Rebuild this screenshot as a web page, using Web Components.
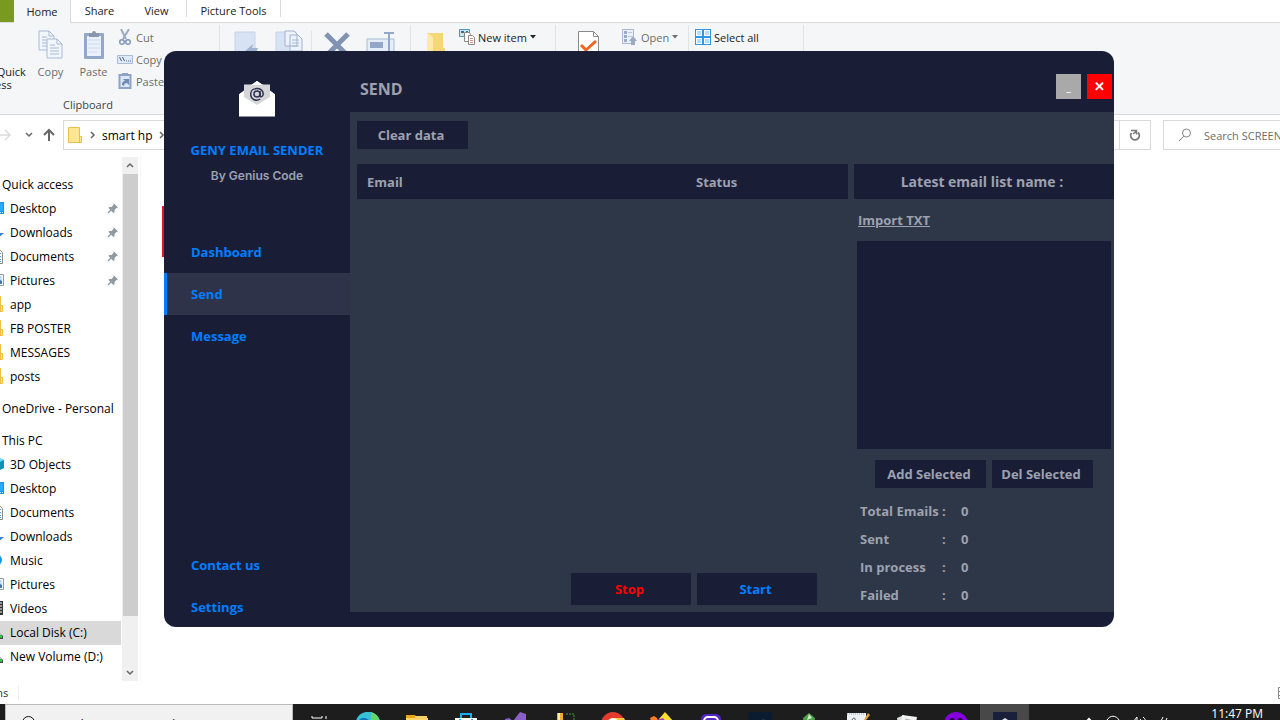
<!DOCTYPE html>
<html lang="en">
<head>
<meta charset="utf-8">
<meta name="viewport" content="width=device-width, initial-scale=1">
<title>Geny Email Sender</title>
<style>
    html, body {
        margin: 0;
        height: 100%;
        overflow: hidden;
    }
    body {
        font-family: "Open Sans", "Noto Sans", sans-serif;
        font-size: 12px;
        color: #000;
        background: #fff;
    }
</style>
</head>
<body>
<desktop-screen></desktop-screen>

<script>
const doc = (x, y) => `<path d="M${x} ${y}h10l5 5v14h-15z" fill="#f1f5fc" stroke="#a9b9d3"/><path d="M${x + 10} ${y}v5h5M${x + 3} ${y + 6}h5M${x + 3} ${y + 9}h9M${x + 3} ${y + 12}h9M${x + 3} ${y + 15}h9" fill="none" stroke="#a9b9d3"/>`;

// name: [width, height, svg content]
const ICONS = {
    pin: [20, 30, '<path d="M6 9l7 7-7 7z" fill="#98a3ad"/><path d="M0 14h7v4H0z" fill="#98a3ad"/>'],
    copy: [26, 30, doc(1, 1) + doc(9, 9)],
    paste: [22, 30, '<rect x="1" y="3" width="20" height="26" rx="1" fill="#93a7c8"/><path d="M4 6h14v20H4z" fill="#eaf1fb"/><path d="M5 10h12M5 14h12M5 18h12M5 22h9" stroke="#c9daf0"/><path d="M6 3h3a2 2 0 0 1 4 0h3v4H6z" fill="#8a96ac"/>'],
    cut: [16, 16, '<path d="M4 0l5 10M12 0L6 10" stroke="#9aabc4" stroke-width="2"/><circle cx="5" cy="13" r="2.3" fill="none" stroke="#8296b8" stroke-width="1.5"/><circle cx="11" cy="13" r="2.3" fill="none" stroke="#8296b8" stroke-width="1.5"/>'],
    path: [16, 16, '<path d="M.5 4.500h15v8H.5z" fill="#dfe9f7" stroke="#a9bdd8"/><path d="M2.500 6l2 4M5.500 6l2 4" stroke="#47638f"/><path d="M9 10h1M11 10h1M13 10h1" stroke="#47638f"/>'],
    shortcut: [16, 16, '<path d="M2.500 2h11v13h-11z" fill="#dce7f6" stroke="#8da2c4" stroke-width="2"/><path d="M5 0h6v3H5z" fill="#8da2c4"/><path d="M5 12c0-3 1-4 3-4L6 6h6v6l-2-2c-2 0-3 1-3 3z" fill="#6f8ab5"/>'],
    moveTo: [28, 30, '<path d="M3 2h20v28H3z" fill="#d7e3f4" stroke="#c5d4ea"/><path d="M26 18h-6l1-4-9 8 9 8z" fill="#9fb2d0"/>'],
    copyTo: [28, 30, '<path d="M1 2h20v28H1z" fill="#d7e3f4" stroke="#c5d4ea"/><path d="M10 1h9l3 3v12H10zM15 5h8l4 4v12H15z" fill="#eef3fb" stroke="#9fb2d0"/><path d="M17 10h7M17 13h7M17 16h7" stroke="#a9b9d3"/>'],
    remove: [28, 30, '<path d="M3 4l22 22M25 4L3 26" stroke="#8193b3" stroke-width="5"/>'],
    rename: [30, 30, '<path d="M2 9h27v14H2z" fill="#e4edf9" stroke="#a9bbd6"/><path d="M5 12h13v6H5z" fill="#93a7c8"/><path d="M19 3h10M24 3v26" stroke="#93a7c8" stroke-width="2"/>'],
    folder: [20, 30, '<path d="M2 3h16v15h2v12H2z" fill="#f6d777"/><path d="M2 3l6 4v23H2z" fill="#fdeaa8"/>'],
    newItem: [16, 16, '<path d="M.5.500h10v7H.5z" fill="#c9e6f7" stroke="#4d94bd"/><path d="M2 3h3M7 3h2" stroke="#3a6f94" stroke-width="2"/><path d="M5.500 3.500h5l1 2v7h-6z" fill="#fff" stroke="#888"/><path d="M9.500 6.500h4l2 2v7h-6z" fill="#fff" stroke="#888"/><path d="M11 9.500h3M11 11.500h3M11 13.500h3" stroke="#e08a8a"/>'],
    properties: [24, 30, '<path d="M2.500 1.500h15l5 5V30h-20z" fill="#fff" stroke="#8b8b8b"/><path d="M17.500 1.500v5h5" fill="none" stroke="#8b8b8b"/><path d="M5 15l5 5 10-9" fill="none" stroke="#ee6622" stroke-width="3"/>'],
    open: [16, 16, '<path d="M.5.500h11v14H.5z" fill="#eaf0fa" stroke="#a9b9d3"/><path d="M2 2h3v3H2zM2 6h3v3H2zM2 10h3v3H2z" fill="#9aabc8"/><path d="M6 3.500h4M6 7.500h4" stroke="#b9c7de"/><path d="M11 7l4 5h-2v4H9v-4H7z" fill="#9aa9c6"/>'],
    selectAll: [16, 16, '<path d="M0 0h16v16H0z" fill="#3394e0"/><path d="M1 1h6v6H1zM9 1h6v6H9zM1 9h6v6H1zM9 9h6v6H9z" fill="#fff"/><path d="M2 2h4v4H2zM10 2h4v4h-4zM2 10h4v4H2zM10 10h4v4h-4z" fill="#b5dcfa"/>'],
    caret: [6, 4, '<path d="M0 0h6L3 3.500z" fill="currentColor"/>'],
    forward: [16, 16, '<path d="M1 8h12M8 3l5 5-5 5" fill="none" stroke="#dcdcdc" stroke-width="1.500"/>'],
    chevronDown: [8, 8, '<path d="M1 2l3 3 3-3" fill="none" stroke="#666" stroke-width="1.500"/>'],
    chevronRight: [8, 8, '<path d="M2 1l3 3-3 3" fill="none" stroke="#666" stroke-width="1.500"/>'],
    up: [16, 16, '<path d="M8 14V3M3 8l5-5 5 5" fill="none" stroke="#666" stroke-width="2"/>'],
    folderSmall: [16, 16, '<path d="M.5.500h11v9h2v6H.5z" fill="#ffe694" stroke="#e9bf45"/><path d="M11.500 9v6" stroke="#e9bf45"/>'],
    refresh: [14, 14, '<path d="M3.500 5a4.300 4.300 0 1 0 6.500-.5" fill="none" stroke="#777" stroke-width="1.800"/><path d="M3 2.500h5.500v4M8.500 3L5 6" fill="none" stroke="#777" stroke-width="1.500"/>'],
    search: [14, 14, '<circle cx="8.500" cy="5" r="4" fill="none" stroke="#8a8088"/><path d="M6 8l-5 5" stroke="#8a8088"/>'],
    pushpin: [12, 12, '<path d="M6.500 1l4.500 4.500-1.500.5-2 2 0 2.500-1 .5L1.500 6l.5-1h2.500l2-2z" fill="#8d99a3"/><path d="M4 8l-3 3" stroke="#8d99a3" stroke-width="1.500"/>'],
    navDesktop: [16, 16, '<path d="M0 2h15v12H0z" fill="#1593e8"/><path d="M0 3h14v8H0z" fill="#29a9ff"/><path d="M1 12.500h13" stroke="#c9ecff" stroke-dasharray="1 1"/>'],
    navDownloads: [16, 16, '<path d="M5 9h10l-7 6-7-6h4V1h5v8" fill="#3485d1"/>'],
    navDocuments: [16, 16, '<path d="M1.500.500h8l4 4v11h-12z" fill="#fff" stroke="#888"/><path d="M6 5.500h6M6 8.500h6M6 11.500h6M6 13.500h6" stroke="#4d9bd8"/>'],
    navPictures: [16, 16, '<path d="M.5 2.500h14v11H.5z" fill="#fff" stroke="#8c9aa6"/><path d="M2 4h11v8H2z" fill="#bfe0f8"/><path d="M5 12c2-5 5-5 8-3v3z" fill="#4377ad"/>'],
    navObjects: [16, 16, '<path d="M8 1l7 3v8l-7 3-7-3V4z" fill="#1ab3d6"/><path d="M8 7l7-3v8l-7 3z" fill="#0793b8"/><path d="M1 4l7-3 7 3-7 3z" fill="#6bdcf0"/>'],
    navMusic: [16, 16, '<circle cx="7" cy="8" r="6" fill="#1696ec"/><path d="M6 4v7" stroke="#fff"/>'],
    navVideos: [16, 16, '<path d="M0 1h14v14H0z" fill="#333"/><path d="M0 2h10v6H0z" fill="#568ec7"/><path d="M0 8h10v6H0z" fill="#56a04f"/><path d="M12 2v12" stroke="#fff" stroke-dasharray="2 1"/>'],
    navDisk: [16, 16, '<path d="M1 9h10l3 3v3H0v-4z" fill="#4b4f52"/><path d="M1 9l2-2h7l3 4H0z" fill="#c7cbce"/><path d="M10 12.500h3" stroke="#36e04a" stroke-width="2"/>'],
    envelope: [38, 38, '<path d="M1 14L19 1l18 13v22.500H1z" fill="#fff"/><path d="M6 4.500h26V17l-13 8L6 17z" fill="#d5d6d8"/><path d="M13 5L19 1l6 4z" fill="#fff"/><path d="M6 4v6L1 14V4zM32 4v6l5 4V4z" fill="#191e36"/><circle cx="19" cy="14" r="3" fill="none" stroke="#2c3150" stroke-width="1.500"/><path d="M22 11v4.500c0 2 3.200 1.500 3.200-1.700 0-7-12.500-7-12.500.2 0 6 6 7.500 9.500 5" fill="none" stroke="#2c3150" stroke-width="1.500"/>'],
    taskView: [24, 24, '<path d="M5 4v2h10V4M5 11h10v7H5zM19 4v3M19 10v8" fill="none" stroke="#fff"/>'],
    edge: [24, 24, '<circle cx="12" cy="12" r="12" fill="#1583d0"/><path d="M0 9C3-3 21-3 24 9v4H12z" fill="#35c2d4"/><path d="M15 0c6 2 9 6 9 13h-9z" fill="#63d66a"/><path d="M2 10c2-5 8-5 12-1v5H2z" fill="#1473b8"/>'],
    explorer: [24, 24, '<path d="M1 3h9l2 3H1z" fill="#e8a317"/><path d="M1 6h22v15H1z" fill="#ffd766"/><path d="M10 4h12v3H10z" fill="#f7cf68"/>'],
    store: [24, 24, '<path d="M7 6V2h10v4" fill="none" stroke="#1badf4" stroke-width="2"/><path d="M1 6h22v16H1z" fill="#fff"/><path d="M5 7h2v2H5zM17 7h2v2h-2z" fill="#1badf4"/>'],
    studio: [24, 24, '<path d="M17 0l6 2v20l-6 2L6 13l-4 3V7l4-1 4 3z" fill="#8a5fc8"/>'],
    tools: [24, 24, '<path d="M5 1h6v21H5z" fill="#e9b12f"/><path d="M6 1h2v21H6z" fill="#fff0a2"/><path d="M14 2h8v19" fill="none" stroke="#3f9b3b" stroke-dasharray="2 1"/>'],
    chrome: [24, 24, '<circle cx="12" cy="12" r="12" fill="#e33b2e"/><path d="M2 8l10 4-1 12A12 12 0 0 1 2 8z" fill="#2ba24c"/><path d="M12 6h11a12 12 0 0 1-10 18z" fill="#fcc934"/><circle cx="12" cy="12" r="6" fill="#fff"/><circle cx="12" cy="12" r="4" fill="#3f7de8"/>'],
    flame: [24, 24, '<path d="M0 6l4-2 3 2 2 5-4 10z" fill="#ff7d1e"/><path d="M9 7l6-7 9 10-4 12H8z" fill="#ffdf32"/><path d="M7 8l6-2 4 5-4 10H6z" fill="#a03ccb"/>'],
    camera: [24, 24, '<rect x="2" y="2" width="20" height="20" rx="5" fill="#5424c4"/><rect x="5" y="5" width="14" height="14" rx="4" fill="none" stroke="#fff" stroke-width="2"/><circle cx="12" cy="12" r="3" fill="none" stroke="#fff" stroke-width="2"/>'],
    navy: [24, 24, '<path d="M0 0h24v24H0z" fill="#0b1b30"/><path d="M9 9h2M14 8h3" stroke="#24466b"/>'],
    gem: [24, 24, '<path d="M12 1l6 5-1 8-5 8-5-8-1-8z" fill="#4e9e4b"/><path d="M12 2l3 4-5 2z" fill="#cdecc6"/>'],
    notepad: [24, 24, '<path d="M1 1h19v22H1z" fill="#eef1f4"/><path d="M1 2h18" stroke="#9da2a7" stroke-dasharray="1 1"/><path d="M6 8c1-3 4-2 3 0" fill="none" stroke="#4d5661"/><path d="M22 1l2 2-7 9-2 1z" fill="#e0a03c"/>'],
    papers: [24, 24, '<path d="M2 6l7-3 3 12-8 3z" fill="#d9dcdc"/><path d="M7 3l15 2-3 17-14-3z" fill="#f2f3f3"/><path d="M10 7l9 2" stroke="#aaa"/>'],
    mask: [24, 24, '<circle cx="12" cy="12" r="12" fill="#8400dd"/><path d="M6 9a2 2 0 0 1 4 0M14 9a2 2 0 0 1 4 0" fill="none" stroke="#280149" stroke-width="2"/>'],
    sender: [24, 24, '<path d="M0 0h24v24H0z" fill="#1a1f3b"/><path d="M6 10l6-4 6 4v8H6z" fill="#e5e5ea"/>'],
    trayUp: [16, 16, '<path d="M3 9l5-5 5 5" fill="none" stroke="#fff" stroke-width="2"/>'],
    wifi: [16, 16, '<path d="M2 5c3-5 9-5 12 0M4 9c2-3 6-3 8 0" fill="none" stroke="#fff"/>'],
    volume: [20, 16, '<path d="M1 7h3l4-5v13l-4-4H1zM11 4c3 2 3 6 0 8M14 2c4 3 4 9 0 12" fill="none" stroke="#fff"/>'],
    ink: [12, 16, '<path d="M2 10l4-8M6 12l4-9" stroke="#fff"/>'],
    battery: [26, 16, '<path d="M1 6.500h22v8H1z" fill="none" stroke="#fff"/>'],
    details: [12, 12, '<path d="M.5.500h11v11H.5zM0 4.500h12M0 8.500h12" fill="none" stroke="#888"/>'],
};

// Every element below only has to supply its template.
class BaseElement extends HTMLElement {
    constructor() {
        super();
        this.attachShadow({mode: 'open'});
    }

    connectedCallback() {
        const template = document.createElement('template');
        template.innerHTML = this.getTemplate();
        this.shadowRoot.replaceChildren(template.content.cloneNode(true));
    }
}

class UiIcon extends BaseElement {
    getTemplate() {
        const [w, h, body] = ICONS[this.getAttribute('name')];
        return `
            <style>
                :host { display: block; flex: none; }
                svg { display: block; }
            </style>
            <svg width="${w}" height="${h}" viewBox="0 0 ${w} ${h}" aria-hidden="true">${body}</svg>
        `;
    }
}

/* ---------- file explorer ---------- */

class RibbonTabs extends BaseElement {
    getTemplate() {
        return `
            <style>
                :host {
                    display: flex;
                    height: 22px;
                    border-bottom: 1px solid #dadbdc;
                    font-size: 11px;
                    line-height: 22px;
                }
                button {
                    box-sizing: border-box;
                    width: 57px;
                    padding: 0;
                    border: 0;
                    background: none;
                    font: inherit;
                    color: #222;
                }
                .file { width: 14px; background: #7a9a1f; }
                .home {
                    height: 23px;
                    background: #f4f6f8;
                    border-right: 1px solid #dadbdc;
                }
                .tools {
                    width: 95px;
                    height: 17px;
                    margin-left: 1px;
                    line-height: 22px;
                    border: solid #dadbdc;
                    border-width: 0 1px;
                }
            </style>
            <button class="file" aria-label="File"></button>
            <button class="home">Home</button>
            <button>Share</button>
            <button>View</button>
            <button class="tools">Picture Tools</button>
        `;
    }
}

class RibbonButton extends BaseElement {
    getTemplate() {
        const caret = this.hasAttribute('menu') ? '<ui-icon name="caret"></ui-icon>' : '';
        return `
            <style>
                :host { display: block; flex: none; width: 43px; padding-top: 4px; color: #222; }
                :host([small]) { width: auto; padding-top: 0; }
                :host([wide]) { width: 68px; }
                :host([off]) { color: #6d6d6d; }
                button {
                    display: flex;
                    flex-direction: column;
                    align-items: center;
                    gap: 5px;
                    width: 100%;
                    padding: 0;
                    border: 0;
                    background: none;
                    font: inherit;
                    font-size: 11px;
                    line-height: 13px;
                    color: inherit;
                }
                :host([small]) button { flex-direction: row; gap: 3px; height: 22px; white-space: nowrap; }
            </style>
            <button>
                <ui-icon name="${this.getAttribute('icon')}"></ui-icon>
                <slot></slot>
                ${caret}
            </button>
        `;
    }
}

class RibbonGroup extends BaseElement {
    getTemplate() {
        const label = this.getAttribute('label') || '';
        return `
            <style>
                :host {
                    display: flex;
                    flex-direction: column;
                    justify-content: space-between;
                    flex: none;
                    box-sizing: border-box;
                    border-right: 1px solid #e1e3e5;
                    margin: 2px 0;
                    padding: 1px 0 0 4px;
                }
                .items { display: flex; align-items: flex-start; }
                .label { margin-left: -4px; text-align: center; font-size: 11px; line-height: 15px; color: #444; }
            </style>
            <div class="items"><slot></slot></div>
            <div class="label">${label}</div>
        `;
    }
}

class ExplorerRibbon extends BaseElement {
    getTemplate() {
        return `
            <style>
                :host {
                    display: flex;
                    height: 91px;
                    background: #f4f6f8;
                    border-bottom: 1px solid #dadbdc;
                    overflow: hidden;
                }
                .small { display: grid; padding-left: 2px; }
                .clipboard { width: 263px; margin-left: -43px; }
                .organize { width: 191px; }
                .new { width: 145px; padding-left: 2px; }
                .new .small { padding-left: 3px; }
                .open { width: 133px; padding-left: 10px; }
                .open .small { padding-left: 13px; }
                .select { width: 115px; }
                .split { width: 1px; height: 60px; margin: 5px 3px 0 1px; background: #e1e3e5; }
            </style>
            <ribbon-group class="clipboard" label="Clipboard">
                <ribbon-button wide icon="pin">Pin to Quick access</ribbon-button>
                <ribbon-button off icon="copy">Copy</ribbon-button>
                <ribbon-button off icon="paste">Paste</ribbon-button>
                <div class="small">
                    <ribbon-button small off icon="cut">Cut</ribbon-button>
                    <ribbon-button small off icon="path">Copy</ribbon-button>
                    <ribbon-button small off icon="shortcut">Paste</ribbon-button>
                </div>
            </ribbon-group>
            <ribbon-group class="organize">
                <ribbon-button off icon="moveTo"></ribbon-button>
                <ribbon-button off icon="copyTo"></ribbon-button>
                <span class="split"></span>
                <ribbon-button off icon="remove"></ribbon-button>
                <ribbon-button off icon="rename"></ribbon-button>
            </ribbon-group>
            <ribbon-group class="new">
                <ribbon-button icon="folder"></ribbon-button>
                <div class="small">
                    <ribbon-button small menu icon="newItem">New item</ribbon-button>
                </div>
            </ribbon-group>
            <ribbon-group class="open">
                <ribbon-button icon="properties"></ribbon-button>
                <div class="small">
                    <ribbon-button small off menu icon="open">Open</ribbon-button>
                </div>
            </ribbon-group>
            <ribbon-group class="select">
                <div class="small">
                    <ribbon-button small icon="selectAll">Select all</ribbon-button>
                </div>
            </ribbon-group>
        `;
    }
}

class AddressBar extends BaseElement {
    getTemplate() {
        return `
            <style>
                :host { display: flex; height: 30px; padding: 5px 0 7px; overflow: hidden; }
                .history { display: flex; align-items: center; width: 63px; }
                .history ui-icon:nth-child(2) { margin: 0 8px 0 12px; }
                .history ui-icon:first-child { margin-left: -3px; }
                .path, .search {
                    box-sizing: border-box;
                    display: flex;
                    align-items: center;
                    border: 1px solid #d9d9d9;
                }
                .path { flex: 1; gap: 5px; padding-left: 4px; }
                .refresh {
                    display: grid;
                    place-items: center;
                    align-self: stretch;
                    width: 31px;
                    margin-left: auto;
                    padding: 0;
                    border: 0;
                    border-left: 1px solid #d9d9d9;
                    background: none;
                }
                .search { width: 130px; margin: 0 -13px 0 12px; padding-left: 14px; gap: 12px; }
                input {
                    width: 100px;
                    min-width: 0;
                    padding: 0;
                    border: 0;
                    font: inherit;
                    font-size: 11px;
                    background: none;
                }
                input::placeholder { color: #6d6d6d; }
            </style>
            <div class="history">
                <ui-icon name="forward"></ui-icon>
                <ui-icon name="chevronDown"></ui-icon>
                <ui-icon name="up"></ui-icon>
            </div>
            <div class="path">
                <ui-icon name="folderSmall"></ui-icon>
                <ui-icon name="chevronRight"></ui-icon>
                <span>smart hp</span>
                <ui-icon name="chevronRight"></ui-icon>
                <button class="refresh" aria-label="Refresh"><ui-icon name="refresh"></ui-icon></button>
            </div>
            <div class="search">
                <ui-icon name="search"></ui-icon>
                <input type="search" aria-label="Search" placeholder="Search SCREEN">
            </div>
        `;
    }
}

class NavItem extends BaseElement {
    getTemplate() {
        const icon = this.getAttribute('icon');
        return `
            <style>
                :host { display: block; }
                :host([section]) { margin-top: 8px; }
                a {
                    display: flex;
                    align-items: center;
                    box-sizing: border-box;
                    height: 24px;
                    padding: 0 2px 2px;
                    color: #000;
                    text-decoration: none;
                    white-space: nowrap;
                }
                :host([icon]) a { padding-left: 0; }
                :host([selected]) a { background: #d9d9d9; }
                .icon { margin: 0 5px 0 -11px; }
                .pin { margin-left: auto; }
            </style>
            <a href="#">
                ${icon ? `<ui-icon class="icon" name="${icon}"></ui-icon>` : ''}
                <slot></slot>
                ${this.hasAttribute('pinned') ? '<ui-icon class="pin" name="pushpin"></ui-icon>' : ''}
            </a>
        `;
    }
}

class NavPane extends BaseElement {
    getTemplate() {
        return `
            <style>
                :host {
                    display: flex;
                    box-sizing: border-box;
                    width: 141px;
                    border-right: 1px solid #f7f7f7;
                    overflow: hidden;
                }
                nav { width: 121px; padding-top: 8px; }
                .bar {
                    display: flex;
                    flex-direction: column;
                    align-items: center;
                    width: 16px;
                    margin-left: 1px;
                    background: #f0f0f0;
                }
                .bar span { display: grid; place-items: center; height: 17px; }
                .up { transform: rotate(180deg); }
                .thumb { width: 15px; flex: 1; margin-bottom: 48px; background: #cdcdcd; }
            </style>
            <nav>
                <nav-item section>Quick access</nav-item>
                <nav-item icon="navDesktop" pinned>Desktop</nav-item>
                <nav-item icon="navDownloads" pinned>Downloads</nav-item>
                <nav-item icon="navDocuments" pinned>Documents</nav-item>
                <nav-item icon="navPictures" pinned>Pictures</nav-item>
                <nav-item icon="folderSmall">app</nav-item>
                <nav-item icon="folderSmall">FB POSTER</nav-item>
                <nav-item icon="folderSmall">MESSAGES</nav-item>
                <nav-item icon="folderSmall">posts</nav-item>
                <nav-item section>OneDrive - Personal</nav-item>
                <nav-item section>This PC</nav-item>
                <nav-item icon="navObjects">3D Objects</nav-item>
                <nav-item icon="navDesktop">Desktop</nav-item>
                <nav-item icon="navDocuments">Documents</nav-item>
                <nav-item icon="navDownloads">Downloads</nav-item>
                <nav-item icon="navMusic">Music</nav-item>
                <nav-item icon="navPictures">Pictures</nav-item>
                <nav-item icon="navVideos">Videos</nav-item>
                <nav-item icon="navDisk" selected>Local Disk (C:)</nav-item>
                <nav-item icon="navDisk">New Volume (D:)</nav-item>
            </nav>
            <div class="bar">
                <span class="up"><ui-icon name="chevronDown"></ui-icon></span>
                <div class="thumb"></div>
                <span><ui-icon name="chevronDown"></ui-icon></span>
            </div>
        `;
    }
}

class FileExplorer extends BaseElement {
    getTemplate() {
        return `
            <style>
                :host { display: flex; flex-direction: column; min-height: 0; background: #fff; }
                .body { display: flex; flex: 1; min-height: 0; }
                .files { flex: 1; padding: 49px 21px; }
                .thumb { width: 96px; height: 51px; background: #e3191f; }
                .status {
                    display: flex;
                    align-items: center;
                    justify-content: space-between;
                    height: 23px;
                    overflow: hidden;
                    font-size: 11px;
                    color: #1c2b4a;
                }
                .status span { margin-left: -20px; padding-right: 10px; border-right: 1px solid #eee; }
                .status ui-icon { margin-right: -10px; }
            </style>
            <ribbon-tabs></ribbon-tabs>
            <explorer-ribbon></explorer-ribbon>
            <address-bar></address-bar>
            <div class="body">
                <nav-pane></nav-pane>
                <div class="files"><div class="thumb"></div></div>
            </div>
            <div class="status">
                <span>items</span>
                <ui-icon name="details"></ui-icon>
            </div>
        `;
    }
}

/* ---------- task bar ---------- */

class TaskBar extends BaseElement {
    getTemplate() {
        const apps = ['taskView', 'edge', 'explorer', 'store', 'studio', 'tools', 'chrome', 'flame', 'camera',
            'navy', 'gem', 'notepad', 'papers', 'mask', 'sender'];
        return `
            <style>
                :host {
                    display: flex;
                    align-items: flex-start;
                    height: 40px;
                    background: #1d1d1d;
                    color: #fff;
                }
                .search {
                    box-sizing: border-box;
                    display: flex;
                    align-items: center;
                    gap: 8px;
                    width: 288px;
                    height: 40px;
                    margin: 0 1px 0 5px;
                    padding-left: 16px;
                    background: #f1f1f1;
                    border: 1px solid #b9b9b9;
                }
                .lens { width: 11px; height: 11px; border: 1px solid #111; border-radius: 50%; margin-bottom: 4px; }
                input { flex: 1; padding: 0; border: 0; background: none; font: inherit; font-size: 15px; }
                input::placeholder { color: #333; }
                button {
                    display: grid;
                    justify-content: center;
                    width: 49px;
                    height: 40px;
                    padding: 8px 0;
                    border: 0;
                    background: none;
                }
                button:last-of-type { background: #484848; }
                .tray { display: flex; gap: 8px; margin-left: auto; padding: 11px 4px 0 0; }
                time { margin-top: 2px; padding: 0 17px 0 4px; line-height: 16px; }
            </style>
            <div class="search">
                <span class="lens"></span>
                <input type="search" aria-label="Type here to search" placeholder="Type here to search">
            </div>
            ${apps.map(name => `<button aria-label="${name}"><ui-icon name="${name}"></ui-icon></button>`).join('')}
            <div class="tray">
                <ui-icon name="trayUp"></ui-icon>
                <ui-icon name="wifi"></ui-icon>
                <ui-icon name="volume"></ui-icon>
                <ui-icon name="ink"></ui-icon>
                <ui-icon name="battery"></ui-icon>
            </div>
            <time>11:47 PM</time>
        `;
    }
}

/* ---------- email sender window ---------- */

class SideLink extends BaseElement {
    getTemplate() {
        return `
            <style>
                :host { display: block; }
                a {
                    display: block;
                    padding-left: 24px;
                    border-left: 3px solid transparent;
                    line-height: 42px;
                    color: #007eff;
                    text-decoration: none;
                }
                :host([active]) a { background: #2e334a; border-color: #007eff; }
            </style>
            <a href="#"><slot></slot></a>
        `;
    }
}

class SideMenu extends BaseElement {
    getTemplate() {
        return `
            <style>
                :host { display: flex; flex-direction: column; width: 186px; overflow: hidden; }
                header {
                    display: flex;
                    flex-direction: column;
                    align-items: center;
                    height: 151px;
                    padding-top: 29px;
                }
                h1 { margin: 22px 0 0; font-size: 13px; line-height: 20px; color: #007eff; }
                p { margin: 8px 0 0; font: 600 12px/16px Inter, "Liberation Sans", sans-serif; }
                .bottom { margin: auto 0 -1px; }
            </style>
            <header>
                <ui-icon name="envelope"></ui-icon>
                <h1>GENY EMAIL SENDER</h1>
                <p>By Genius Code</p>
            </header>
            <nav>
                <side-link>Dashboard</side-link>
                <side-link active>Send</side-link>
                <side-link>Message</side-link>
            </nav>
            <nav class="bottom">
                <side-link>Contact us</side-link>
                <side-link>Settings</side-link>
            </nav>
        `;
    }
}

class FlatButton extends BaseElement {
    getTemplate() {
        return `
            <style>
                :host { display: block; width: 111px; height: 28px; }
                :host([tall]) { width: 120px; height: 32px; }
                button {
                    width: 100%;
                    height: 100%;
                    padding: 0 3px 0 0;
                    border: 0;
                    background: #191e36;
                    color: inherit;
                    font: inherit;
                    white-space: nowrap;
                }
            </style>
            <button><slot></slot></button>
        `;
    }
}

class EmailTable extends BaseElement {
    getTemplate() {
        return `
            <style>
                :host { display: block; flex: 1; }
                table { width: 100%; border-collapse: collapse; background: #191e36; }
                th { height: 35px; padding: 0 10px; text-align: left; }
                th:first-child { width: 67%; box-sizing: border-box; }
            </style>
            <table>
                <thead><tr><th scope="col">Email</th><th scope="col">Status</th></tr></thead>
                <tbody></tbody>
            </table>
        `;
    }
}

class StatRow extends BaseElement {
    getTemplate() {
        return `
            <style>
                :host { display: grid; grid-template-columns: 82px 19px 1fr; line-height: 28px; }
            </style>
            <span>${this.getAttribute('label')}</span><span>:</span><slot></slot>
        `;
    }
}

class ListPanel extends BaseElement {
    getTemplate() {
        return `
            <style>
                :host { display: flex; flex-direction: column; width: 260px; }
                h2 {
                    margin: 0;
                    padding-right: 4px;
                    font-size: 14px;
                    line-height: 35px;
                    text-align: center;
                    background: #191e36;
                }
                a { align-self: flex-start; margin: 11px 4px; line-height: 20px; color: inherit; }
                select {
                    height: 208px;
                    margin: 0 3px;
                    border: 0;
                    border-radius: 0;
                    background: #191e36;
                    color: inherit;
                    font: inherit;
                }
                .actions { display: flex; gap: 6px; padding: 11px 21px 9px; }
                .actions flat-button:last-child { width: 101px; }
                stat-row { margin-left: 6px; }
            </style>
            <h2>Latest email list name :</h2>
            <a href="#">Import TXT</a>
            <select multiple aria-label="Imported emails"></select>
            <div class="actions">
                <flat-button>Add Selected</flat-button>
                <flat-button>Del Selected</flat-button>
            </div>
            <stat-row label="Total Emails">0</stat-row>
            <stat-row label="Sent">0</stat-row>
            <stat-row label="In process">0</stat-row>
            <stat-row label="Failed">0</stat-row>
        `;
    }
}

class SenderWindow extends BaseElement {
    getTemplate() {
        return `
            <style>
                :host {
                    display: flex;
                    background: #191e36;
                    border-radius: 12px;
                    overflow: hidden;
                    color: #9ea1b0;
                    font-size: 13px;
                    font-weight: 700;
                }
                main { display: flex; flex-direction: column; flex: 1; }
                header { display: flex; align-items: center; gap: 6px; height: 61px; padding: 0 2px 0 10px; }
                h1 { flex: 1; margin: 14px 0 0; font-size: 16px; line-height: 24px; }
                header button {
                    width: 25px;
                    height: 25px;
                    margin-top: 9px;
                    padding: 0;
                    border: 0;
                    font: inherit;
                    color: #fff;
                    background: #a9a9a9;
                }
                header .minimize { font-size: 11px; }
                header .close { background: #f00; }
                .content {
                    display: flex;
                    flex-direction: column;
                    flex: 1;
                    gap: 15px;
                    margin-bottom: 15px;
                    padding: 9px 0 0 7px;
                    background: #2e3747;
                }
                .columns { display: flex; gap: 6px; flex: 1; }
                .left { display: flex; flex-direction: column; flex: 1; }
                .run { display: flex; justify-content: flex-end; gap: 6px; padding: 0 31px 7px 0; }
                .stop { color: #f00; }
                .start { color: #007eff; }
            </style>
            <side-menu></side-menu>
            <main>
                <header>
                    <h1>SEND</h1>
                    <button class="minimize" aria-label="Minimize">_</button>
                    <button class="close" aria-label="Close">✕</button>
                </header>
                <div class="content">
                    <flat-button>Clear data</flat-button>
                    <div class="columns">
                        <div class="left">
                            <email-table></email-table>
                            <div class="run">
                                <flat-button tall class="stop">Stop</flat-button>
                                <flat-button tall class="start">Start</flat-button>
                            </div>
                        </div>
                        <list-panel></list-panel>
                    </div>
                </div>
            </main>
        `;
    }
}

class DesktopScreen extends BaseElement {
    getTemplate() {
        return `
            <style>
                :host { display: flex; flex-direction: column; height: 100vh; overflow: hidden; }
                file-explorer { flex: 1; }
                /* the task bar runs past the bottom edge of the screen */
                task-bar { flex: none; margin-bottom: -24px; }
                sender-window {
                    position: absolute;
                    left: 164px;
                    right: 166px;
                    top: 51px;
                    bottom: 93px;
                }
            </style>
            <file-explorer></file-explorer>
            <task-bar></task-bar>
            <sender-window></sender-window>
        `;
    }
}

customElements.define('ui-icon', UiIcon);
customElements.define('ribbon-tabs', RibbonTabs);
customElements.define('ribbon-button', RibbonButton);
customElements.define('ribbon-group', RibbonGroup);
customElements.define('explorer-ribbon', ExplorerRibbon);
customElements.define('address-bar', AddressBar);
customElements.define('nav-item', NavItem);
customElements.define('nav-pane', NavPane);
customElements.define('file-explorer', FileExplorer);
customElements.define('task-bar', TaskBar);
customElements.define('side-link', SideLink);
customElements.define('side-menu', SideMenu);
customElements.define('flat-button', FlatButton);
customElements.define('email-table', EmailTable);
customElements.define('stat-row', StatRow);
customElements.define('list-panel', ListPanel);
customElements.define('sender-window', SenderWindow);
customElements.define('desktop-screen', DesktopScreen);
</script>
</body>
</html>
